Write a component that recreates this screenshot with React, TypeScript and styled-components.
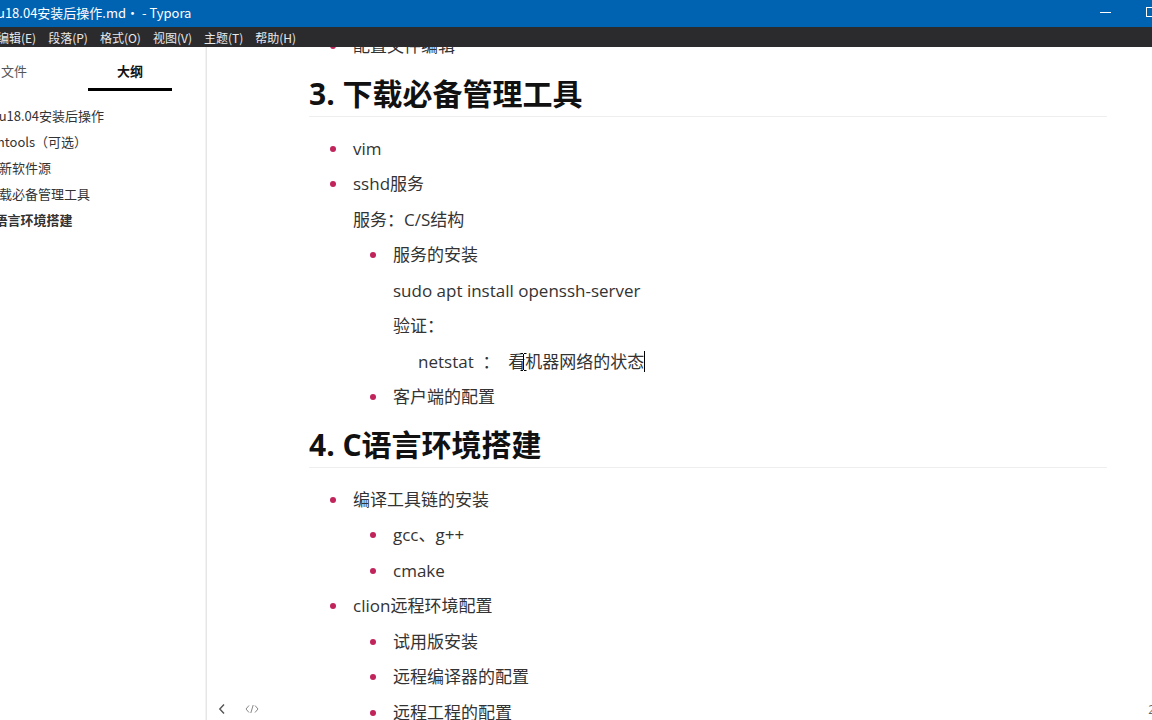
import React from 'react';
import styled, { createGlobalStyle } from 'styled-components';

const GlobalStyle = createGlobalStyle`
  html, body {
    margin: 0;
    padding: 0;
    overflow: hidden;
    background: #ffffff;
  }
  * {
    box-sizing: border-box;
  }
`;

const CJK = `"Open Sans", "Noto Sans CJK SC", sans-serif`;

const Window = styled.div`
  width: 1152px;
  height: 720px;
  display: flex;
  flex-direction: column;
  overflow: hidden;
  font-family: ${CJK};
`;

const TitleBar = styled.div`
  height: 27px;
  flex-shrink: 0;
  background: #0063b1;
  color: #ffffff;
  display: flex;
  align-items: center;
  justify-content: space-between;
  font-size: 13px;
  font-family: "Noto Sans CJK SC", sans-serif;
  overflow: hidden;
`;

const TitleText = styled.span`
  margin-left: -3px;
  margin-top: -3px;
  white-space: nowrap;
`;

const WindowControls = styled.div`
  display: flex;
  align-items: center;
  gap: 35px;
  margin-right: -4px;
  margin-top: -4px;
`;

const MenuBar = styled.div`
  height: 20px;
  flex-shrink: 0;
  background: #2b2b2d;
  display: flex;
  align-items: center;
  gap: 12px;
  overflow: hidden;
`;

const MenuItem = styled.span<{ $first?: boolean }>`
  color: #e8e8e8;
  font-size: 12px;
  font-family: "Noto Sans CJK SC", sans-serif;
  white-space: nowrap;
  margin-left: ${(p) => (p.$first ? '-3px' : '0')};
`;

const Body = styled.div`
  flex: 1;
  display: flex;
  min-height: 0;
`;

const Sidebar = styled.aside`
  width: 207px;
  flex-shrink: 0;
  border-right: 1px solid #e6e6e6;
  box-shadow: inset -6px 0 0 -5px #f3f3f3;
  display: flex;
  flex-direction: column;
  overflow: hidden;
  background: #ffffff;
`;

const Tabs = styled.div`
  display: flex;
  margin-left: -44px;
  height: 48px;
  padding-top: 14px;
`;

const Tab = styled.div<{ $active?: boolean }>`
  width: 116px;
  display: flex;
  flex-direction: column;
  align-items: center;
  font-size: 13px;
  font-family: "Noto Sans CJK SC", sans-serif;
  font-weight: ${(p) => (p.$active ? 700 : 400)};
  color: ${(p) => (p.$active ? '#111' : '#555')};

  &::after {
    content: '';
    width: 84px;
    height: 3px;
    margin-top: 8px;
    background: ${(p) => (p.$active ? '#000' : 'transparent')};
  }
`;

const Outline = styled.ul`
  list-style: none;
  margin: 8px 0 0;
  padding: 0;
`;

const OutlineItem = styled.li<{ $level: number; $active?: boolean }>`
  height: 26px;
  line-height: 26px;
  font-size: 13px;
  font-family: "Noto Sans CJK SC", sans-serif;
  color: #333;
  white-space: nowrap;
  font-weight: ${(p) => (p.$active ? 700 : 400)};
  margin-left: ${(p) => (p.$level === 1 ? '-38px' : '-14px')};
`;

const Main = styled.main`
  flex: 1;
  position: relative;
  overflow: hidden;
`;

const Page = styled.div`
  margin-top: -19px;
  padding-left: 102px;
  width: 900px;
  color: #333;
  font-size: 17px;
`;

const Heading = styled.h2`
  font-size: 30px;
  font-weight: 700;
  line-height: 38px;
  color: #111;
  margin: 11px 0 14px;
  padding-bottom: 3px;
  border-bottom: 1px solid #eeeeee;
`;

const List = styled.ul<{ $nested?: boolean }>`
  list-style: none;
  margin: 0;
  padding-left: ${(p) => (p.$nested ? '40px' : '44px')};
`;

const Item = styled.li`
  position: relative;

  &::before {
    content: '';
    position: absolute;
    left: -23px;
    top: 15px;
    width: 6px;
    height: 6px;
    border-radius: 50%;
    background: #c0245a;
  }
`;

const Line = styled.div<{ $indent?: number }>`
  line-height: 35.5px;
  height: 35.5px;
  white-space: pre;
  padding-left: ${(p) => p.$indent ?? 0}px;
`;

const Caret = styled.span`
  display: inline-block;
  width: 0;
  height: 21px;
  border-left: 1px solid #000;
  vertical-align: middle;
  margin-top: -3px;
`;

const IBeam = styled.svg`
  position: absolute;
  left: 313px;
  top: 306px;
`;

const Footer = styled.div`
  position: absolute;
  left: 0;
  right: 0;
  bottom: 0;
  height: 22px;
  display: flex;
  align-items: center;
  padding-left: 7px;
  gap: 14px;
  color: #777;
  pointer-events: none;
`;

const FooterButton = styled.span`
  display: flex;
  align-items: center;
  justify-content: center;
  width: 16px;
  height: 16px;
`;

const WordCount = styled.span`
  margin-left: auto;
  margin-right: -3px;
  font-size: 12px;
  color: #666;
`;

const outline = [
  { text: 'ubuntu18.04安装后操作', level: 1 },
  { text: 'vmtools（可选）', level: 2 },
  { text: '更新软件源', level: 2 },
  { text: '下载必备管理工具', level: 2 },
  { text: 'C语言环境搭建', level: 2, active: true },
];

const menus = ['编辑(E)', '段落(P)', '格式(O)', '视图(V)', '主题(T)', '帮助(H)'];

const App: React.FC = () => {
  return (
    <>
      <GlobalStyle />
      <Window>
        <TitleBar>
          <TitleText>u18.04安装后操作.md• - Typora</TitleText>
          <WindowControls>
            <svg width="11" height="10" viewBox="0 0 11 10">
              <line x1="0" y1="5.5" x2="11" y2="5.5" stroke="#fff" strokeWidth="1" />
            </svg>
            <svg width="10" height="10" viewBox="0 0 10 10">
              <rect x="0.5" y="0.5" width="9" height="9" fill="none" stroke="#fff" strokeWidth="1" />
            </svg>
          </WindowControls>
        </TitleBar>
        <MenuBar>
          {menus.map((m, i) => (
            <MenuItem key={m} $first={i === 0}>
              {m}
            </MenuItem>
          ))}
        </MenuBar>
        <Body>
          <Sidebar>
            <Tabs>
              <Tab>文件</Tab>
              <Tab $active>大纲</Tab>
            </Tabs>
            <Outline>
              {outline.map((o) => (
                <OutlineItem key={o.text} $level={o.level} $active={o.active}>
                  {o.text}
                </OutlineItem>
              ))}
            </Outline>
          </Sidebar>
          <Main>
            <Page>
              <List>
                <Item>
                  <Line>配置文件编辑</Line>
                </Item>
              </List>
              <Heading>3. 下载必备管理工具</Heading>
              <List>
                <Item>
                  <Line>vim</Line>
                </Item>
                <Item>
                  <Line>sshd服务</Line>
                  <Line>服务：C/S结构</Line>
                  <List $nested>
                    <Item>
                      <Line>服务的安装</Line>
                      <Line>sudo apt install openssh-server</Line>
                      <Line>验证：</Line>
                      <Line $indent={25}>
                        {'netstat  ：  看机器网络的状态'}
                        <Caret />
                      </Line>
                    </Item>
                    <Item>
                      <Line>客户端的配置</Line>
                    </Item>
                  </List>
                </Item>
              </List>
              <Heading>4. C语言环境搭建</Heading>
              <List>
                <Item>
                  <Line>编译工具链的安装</Line>
                  <List $nested>
                    <Item>
                      <Line>gcc、g++</Line>
                    </Item>
                    <Item>
                      <Line>cmake</Line>
                    </Item>
                  </List>
                </Item>
                <Item>
                  <Line>clion远程环境配置</Line>
                  <List $nested>
                    <Item>
                      <Line>试用版安装</Line>
                    </Item>
                    <Item>
                      <Line>远程编译器的配置</Line>
                    </Item>
                    <Item>
                      <Line>远程工程的配置</Line>
                    </Item>
                  </List>
                </Item>
              </List>
            </Page>
            <IBeam width="7" height="18" viewBox="0 0 7 18">
              <path d="M0.5 0.5h2.5M4 0.5h2.5M3.5 1v16M0.5 17.5h2.5M4 17.5h2.5" stroke="#000" strokeWidth="1" fill="none" />
            </IBeam>
            <Footer>
              <FooterButton>
                <svg width="8" height="12" viewBox="0 0 8 12">
                  <path d="M6 1.5L1.8 6L6 10.5" stroke="#555" strokeWidth="1.4" fill="none" />
                </svg>
              </FooterButton>
              <FooterButton>
                <svg width="14" height="10" viewBox="0 0 14 10">
                  <path d="M4 1.5L1 5l3 3.5M10 1.5L13 5l-3 3.5M8.2 1L5.8 9" stroke="#888" strokeWidth="1" fill="none" />
                </svg>
              </FooterButton>
              <WordCount>2</WordCount>
            </Footer>
          </Main>
        </Body>
      </Window>
    </>
  );
};

export default App;
